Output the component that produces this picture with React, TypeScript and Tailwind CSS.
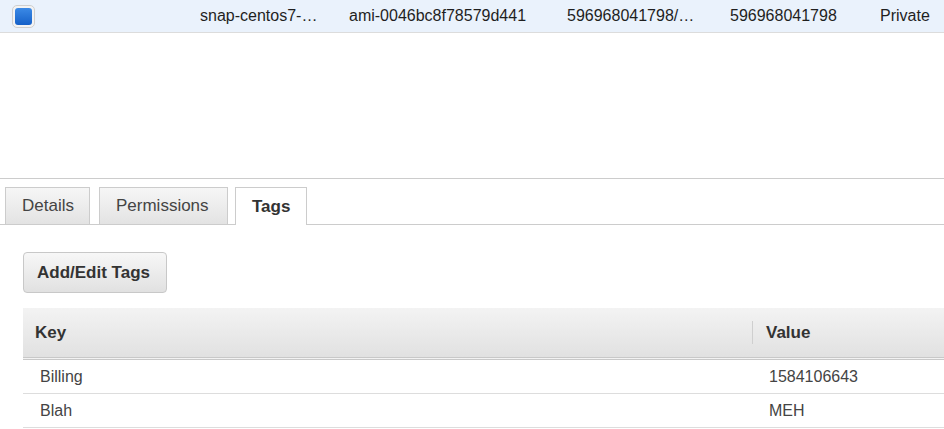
const cell = 'shrink-0 truncate';

export default function App() {
  return (
    <div className="w-[944px] h-[429px] overflow-hidden bg-white text-[#333] font-['Liberation_Sans',Arial,sans-serif]">
      {/* selected row of the image list */}
      <div className="flex items-center h-[33px] bg-[#eaf2fc] border-b border-[#dcdcdc] text-[16px] text-[#1f1f1f] whitespace-nowrap">
        <div className="w-[48px] shrink-0 flex items-center justify-start pl-[12px]">
          <span className="w-[23px] h-[23px] rounded-[5px] border border-[#cfcfcf] bg-[#f3f3f3] flex items-center justify-center">
            <span className="w-[17px] h-[17px] rounded-[3px] bg-gradient-to-b from-[#3b8ae6] to-[#1560c8]" />
          </span>
        </div>
        <div className="w-[152px] shrink-0" />
        <div className={`${cell} w-[149px]`}>snap-centos7-…</div>
        <div className={`${cell} w-[218px]`}>ami-0046bc8f78579d441</div>
        <div className={`${cell} w-[163px]`}>596968041798/…</div>
        <div className={`${cell} w-[150px]`}>596968041798</div>
        <div className={`${cell} w-[64px]`}>Private</div>
      </div>

      <div className="h-[145px]" />

      {/* detail pane */}
      <div className="border-t border-[#cccccc] pt-[8px]">
        <div className="flex items-end h-[38px] border-b border-[#cccccc] pl-[5px] text-[17px]">
          <div className="h-[37px] w-[85px] flex items-center pl-[16px] border border-b-0 border-[#cccccc] bg-gradient-to-b from-[#f6f6f6] to-[#e3e3e3] text-[#444]">
            Details
          </div>
          <div className="h-[37px] w-[129px] ml-[9px] flex items-center pl-[16px] border border-b-0 border-[#cccccc] bg-gradient-to-b from-[#f6f6f6] to-[#e3e3e3] text-[#444]">
            Permissions
          </div>
          <div className="h-[38px] w-[72px] ml-[7px] -mb-px flex items-center pl-[16px] border border-b-0 border-[#cccccc] bg-white font-bold text-[#333]">
            Tags
          </div>
        </div>

        <div className="pl-[23px] pt-[27px]">
          <button className="h-[41px] w-[144px] rounded-[4px] border border-[#c8c8c8] bg-gradient-to-b from-[#f7f7f7] to-[#e1e1e1] text-[17px] font-bold text-[#333] text-left pl-[13px]">
            Add/Edit Tags
          </button>

          <div className="mt-[15px] w-[940px]">
            <div className="flex items-center h-[52px] bg-gradient-to-b from-[#f3f3f3] to-[#e1e1e1] border-b-[3px] border-double border-[#c8c8c8] text-[17px] font-bold text-[#333]">
              <div className="w-[729px] pl-[12px]">Key</div>
              <div className="w-px h-[23px] bg-[#cfcfcf]" />
              <div className="pl-[13px]">Value</div>
            </div>
            {[
              ['Billing', '1584106643'],
              ['Blah', 'MEH'],
            ].map(([k, v]) => (
              <div key={k} className="flex items-center h-[34px] border-b border-[#dddddd] text-[16px] text-[#444]">
                <div className="w-[730px] pl-[17px]">{k}</div>
                <div className="pl-[16px]">{v}</div>
              </div>
            ))}
          </div>
        </div>
      </div>
    </div>
  );
}
